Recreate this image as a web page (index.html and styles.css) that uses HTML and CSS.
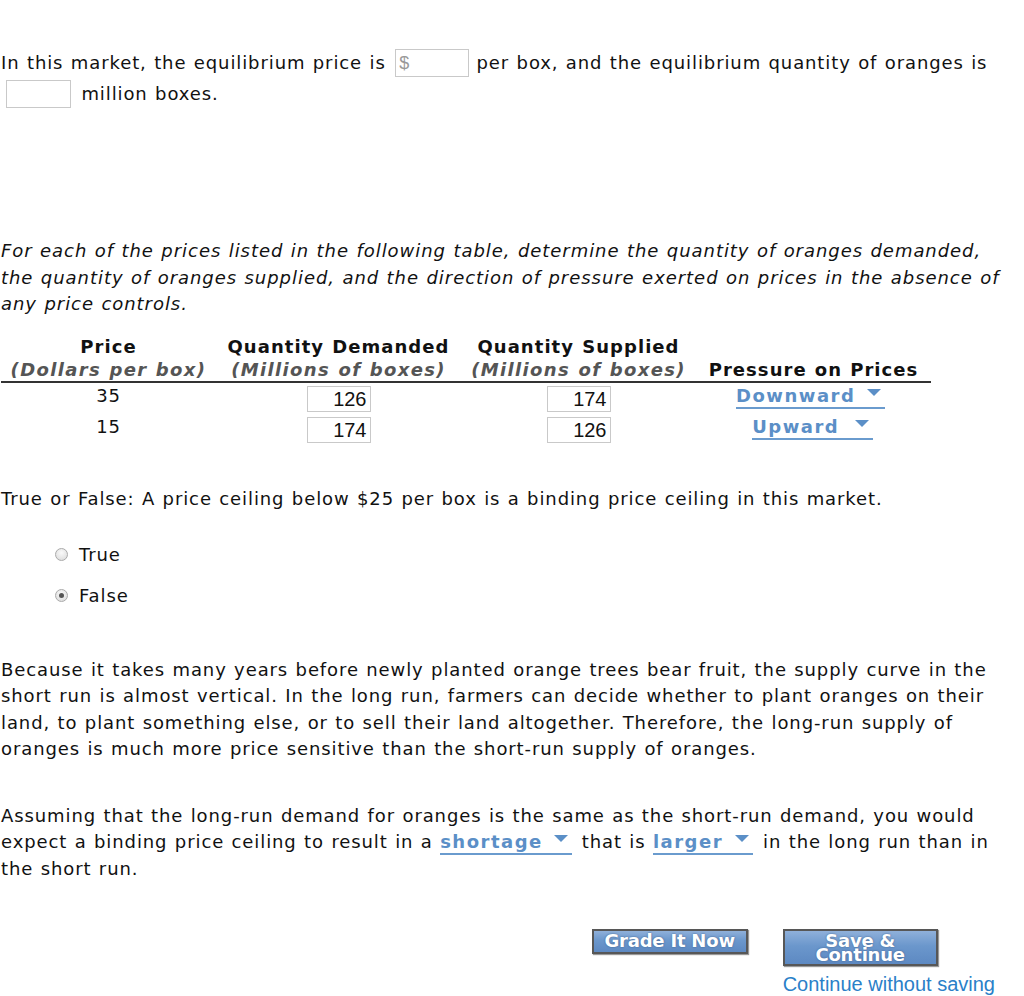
FILE: index.html
```html
<!DOCTYPE html>
<html>
<head>
<meta charset="utf-8">
<link rel="stylesheet" href="styles.css">
</head>
<body>
<div class="page">
  <p class="eq">In this market, the equilibrium price is <span class="inp inp-price">$</span> per box, and the equilibrium quantity of oranges is <span class="inp inp-qty"></span> million boxes.</p>

  <p class="instr">For each of the prices listed in the following table, determine the quantity of oranges demanded, the quantity of oranges supplied, and the direction of pressure exerted on prices in the absence of any price controls.</p>

  <table class="grid">
    <thead>
      <tr>
        <th class="c1"><span class="h">Price</span><span class="sub">(Dollars per box)</span></th>
        <th class="c2"><span class="h">Quantity Demanded</span><span class="sub">(Millions of boxes)</span></th>
        <th class="c3"><span class="h">Quantity Supplied</span><span class="sub">(Millions of boxes)</span></th>
        <th class="c4"><span class="h">Pressure on Prices</span></th>
      </tr>
    </thead>
    <tbody>
      <tr>
        <td class="c1 num">35</td>
        <td class="c2"><span class="cell-inp">126</span></td>
        <td class="c3"><span class="cell-inp">174</span></td>
        <td class="c4"><span class="dd dd-down">Downward <span class="tri"></span></span></td>
      </tr>
      <tr>
        <td class="c1 num">15</td>
        <td class="c2"><span class="cell-inp">174</span></td>
        <td class="c3"><span class="cell-inp">126</span></td>
        <td class="c4"><span class="dd dd-up">Upward <span class="tri tri-wide"></span></span></td>
      </tr>
    </tbody>
  </table>

  <p class="tf">True or False: A price ceiling below $25 per box is a binding price ceiling in this market.</p>

  <div class="radios">
    <div class="radio-row"><span class="radio"></span><span>True</span></div>
    <div class="radio-row"><span class="radio checked"></span><span>False</span></div>
  </div>

  <p class="para">Because it takes many years before newly planted orange trees bear fruit, the supply curve in the short run is almost vertical. In the long run, farmers can decide whether to plant oranges on their land, to plant something else, or to sell their land altogether. Therefore, the long-run supply of oranges is much more price sensitive than the short-run supply of oranges.</p>

  <p class="para para2">Assuming that the long-run demand for oranges is the same as the short-run demand, you would expect a binding price ceiling to result in a <span class="dd dd-short">shortage <span class="tri"></span></span> that is <span class="dd dd-larger">larger <span class="tri"></span></span> in the long run than in the short run.</p>

  <div class="actions">
    <span class="btn btn-grade">Grade It Now</span>
    <div class="save-col">
      <span class="btn btn-save">Save &amp;<br>Continue</span>
      <span class="link">Continue without saving</span>
    </div>
  </div>
</div>
</body>
</html>
```

FILE: styles.css
```css
html, body {
  margin: 0;
  padding: 0;
  background: #ffffff;
}
body {
  font-family: "DejaVu Sans", Verdana, sans-serif;
  font-size: 18px;
  letter-spacing: 0.9px;
  word-spacing: 0.8px;
  color: #111;
}
.page {
  padding: 0 0 0 1px;
  width: 1010px;
}
p { margin: 0; }

.eq {
  margin-top: 47px;
  line-height: 31px;
}
.inp {
  display: inline-block;
  box-sizing: border-box;
  height: 28px;
  border: 1px solid #c9c9c9;
  vertical-align: middle;
  margin-top: -3px;
  color: #999;
  font-family: "Liberation Sans", Arial, sans-serif;
  font-size: 18px;
  letter-spacing: 0;
  line-height: 26px;
  padding-left: 3px;
}
.inp-price { width: 74px; margin-left: 2px; margin-right: 0; }
.inp-qty { width: 65px; margin-left: 5px; margin-right: 3px; }

.instr {
  margin-top: 129px;
  font-style: italic;
  letter-spacing: 0.95px;
  line-height: 26.5px;
  max-width: 1000px;
}

.grid {
  margin-top: 17px;
  border-collapse: collapse;
  width: 930px;
}
.grid th {
  vertical-align: bottom;
  font-weight: bold;
  text-align: center;
  padding: 0;
  line-height: 23px;
  letter-spacing: 1.05px;
  border-bottom: 2px solid #333;
}
.grid th .h { display: block; color: #111; }
.grid th .sub { display: block; font-style: italic; color: #555; letter-spacing: 1.35px; }
.c1 { width: 215px; }
.c2 { width: 245px; }
.c3 { width: 235px; }
.c4 { width: 235px; }
.grid td {
  text-align: center;
  padding: 0;
  height: 31px;
  vertical-align: top;
}
.grid td.num { line-height: 26px; }
.cell-inp {
  display: inline-block;
  box-sizing: border-box;
  width: 64px;
  height: 26px;
  margin-top: 3px;
  border: 1px solid #c9c9c9;
  text-align: right;
  padding-right: 3px;
  line-height: 25px;
  font-family: "Liberation Sans", Arial, sans-serif;
  font-size: 20px;
  letter-spacing: 0;
}

.dd {
  display: inline-block;
  color: #5b8fc7;
  font-weight: bold;
  letter-spacing: 1.5px;
  border-bottom: 2px solid #6a9bce;
  line-height: 22px;
  padding: 0 4px 0 0;
}
.grid .dd { margin-top: 2px; }
.dd-down { margin-right: 6px; }
.dd-up { margin-right: 2px; }
.tri {
  display: inline-block;
  width: 0;
  height: 0;
  border-left: 7px solid transparent;
  border-right: 7px solid transparent;
  border-top: 7px solid #5b8fc7;
  vertical-align: top;
  margin-top: 4px;
  margin-left: 3px;
}
.tri-wide { margin-left: 7px; }

.tf {
  margin-top: 41px;
  line-height: 26px;
}
.radios {
  margin-top: 30px;
  padding-left: 54px;
}
.radio-row {
  display: flex;
  align-items: center;
  gap: 11px;
  height: 26px;
  margin-bottom: 15px;
}
.radio {
  box-sizing: border-box;
  width: 13px;
  height: 13px;
  border-radius: 50%;
  border: 1px solid #aaa;
  background: radial-gradient(circle at 50% 35%, #fafafa, #d8d8d8);
  position: relative;
}
.radio.checked::after {
  content: "";
  position: absolute;
  left: 3px;
  top: 3px;
  width: 5px;
  height: 5px;
  border-radius: 50%;
  background: #555;
}

.para {
  margin-top: 48px;
  line-height: 26.6px;
}
.para2 { margin-top: 40px; }
.para2 .dd { line-height: 22px; }
.dd-short { margin-right: 2px; }
.dd-larger { margin-right: 3px; }

.actions {
  display: flex;
  justify-content: flex-end;
  align-items: flex-start;
  gap: 35px;
  margin-top: 46px;
  padding-right: 16px;
}
.btn {
  display: inline-block;
  box-sizing: border-box;
  border: 2px solid #575757;
  background: linear-gradient(#8fb0da, #6b97cc 45%, #5d89c2);
  color: #fff;
  font-weight: bold;
  text-align: center;
  text-shadow: 0 0 2px #3c5f8c;
  font-size: 18px;
  letter-spacing: -0.2px;
  word-spacing: 0;
  box-shadow: 1px 1px 1px #999;
}
.btn-grade {
  width: 156px;
  height: 25px;
  line-height: 20px;
}
.btn-save {
  width: 155px;
  height: 37px;
  line-height: 14px;
  padding-top: 3px;
}
.save-col {
  display: flex;
  flex-direction: column;
  align-items: flex-start;
}
.link {
  margin-top: 7px;
  font-family: "Liberation Sans", Arial, sans-serif;
  font-size: 20px;
  letter-spacing: 0;
  word-spacing: 0;
  color: #2a80c8;
}
```
